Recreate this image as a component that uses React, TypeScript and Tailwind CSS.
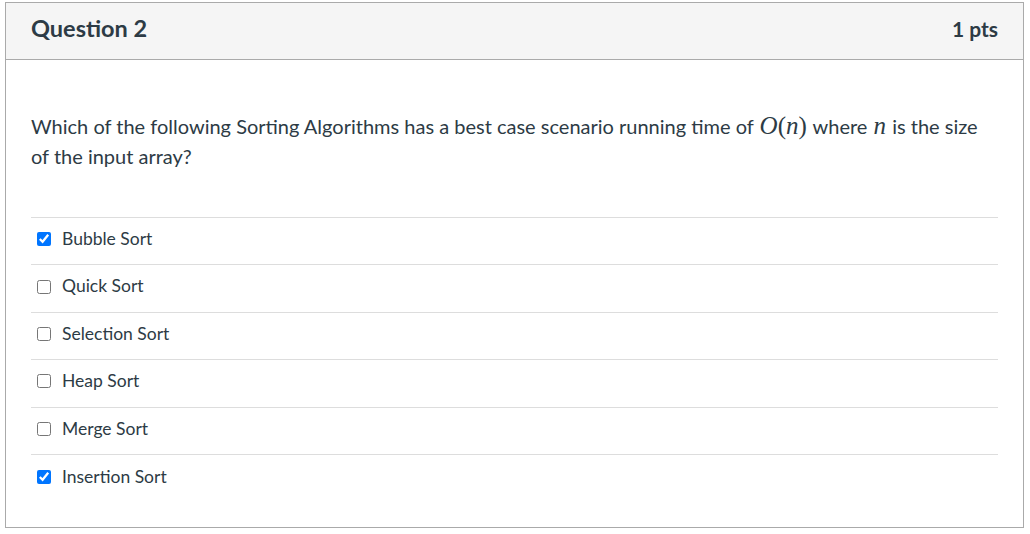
const answers = [
  { label: "Bubble Sort", checked: true },
  { label: "Quick Sort", checked: false },
  { label: "Selection Sort", checked: false },
  { label: "Heap Sort", checked: false },
  { label: "Merge Sort", checked: false },
  { label: "Insertion Sort", checked: true },
];

const math = { fontFamily: '"Liberation Serif", "DejaVu Serif", serif' };

export default function App() {
  return (
    <div className="bg-white pl-[5px] pt-[2px] w-[1030px] h-[534px] font-['Lato',sans-serif] text-[#2d3b45]">
      <div className="w-[1019px] border border-[#aaaaaa]">
        <div className="h-[57px] bg-[#f5f5f5] border-b border-[#aaaaaa] px-[25px] pb-[5px] flex items-center justify-between">
          <h2 className="text-[23.5px] font-bold">Question 2</h2>
          <span className="text-[21px] font-bold text-[#2d3b45]">1 pts</span>
        </div>

        <div className="px-[25px] pt-[51px]">
          <p className="text-[20px] leading-[30px]">
            Which of the following Sorting Algorithms has a best case scenario running time of{" "}
            <span style={math} className="text-[25px] mx-[1px]">
              <i>O</i>(<i>n</i>)
            </span>{" "}
            where{" "}
            <span style={math} className="text-[25px] mx-[1px]">
              <i>n</i>
            </span>{" "}
            is the size of the input array?
          </p>

          <div className="mt-[46px]">
            {answers.map((a, i) => (
              <label
                key={i}
                className={`flex items-center border-t border-[#dddddd] ${
                  i === answers.length - 1 ? "h-[73px] pb-[28px]" : "h-[47.4px] pb-[4px]"
                }`}
              >
                <input
                  type="checkbox"
                  checked={a.checked}
                  readOnly
                  className="m-0 ml-[6px] w-[14px] h-[14px]"
                />
                <span className="ml-[11px] text-[17.5px]">{a.label}</span>
              </label>
            ))}
          </div>
        </div>
      </div>
    </div>
  );
}
